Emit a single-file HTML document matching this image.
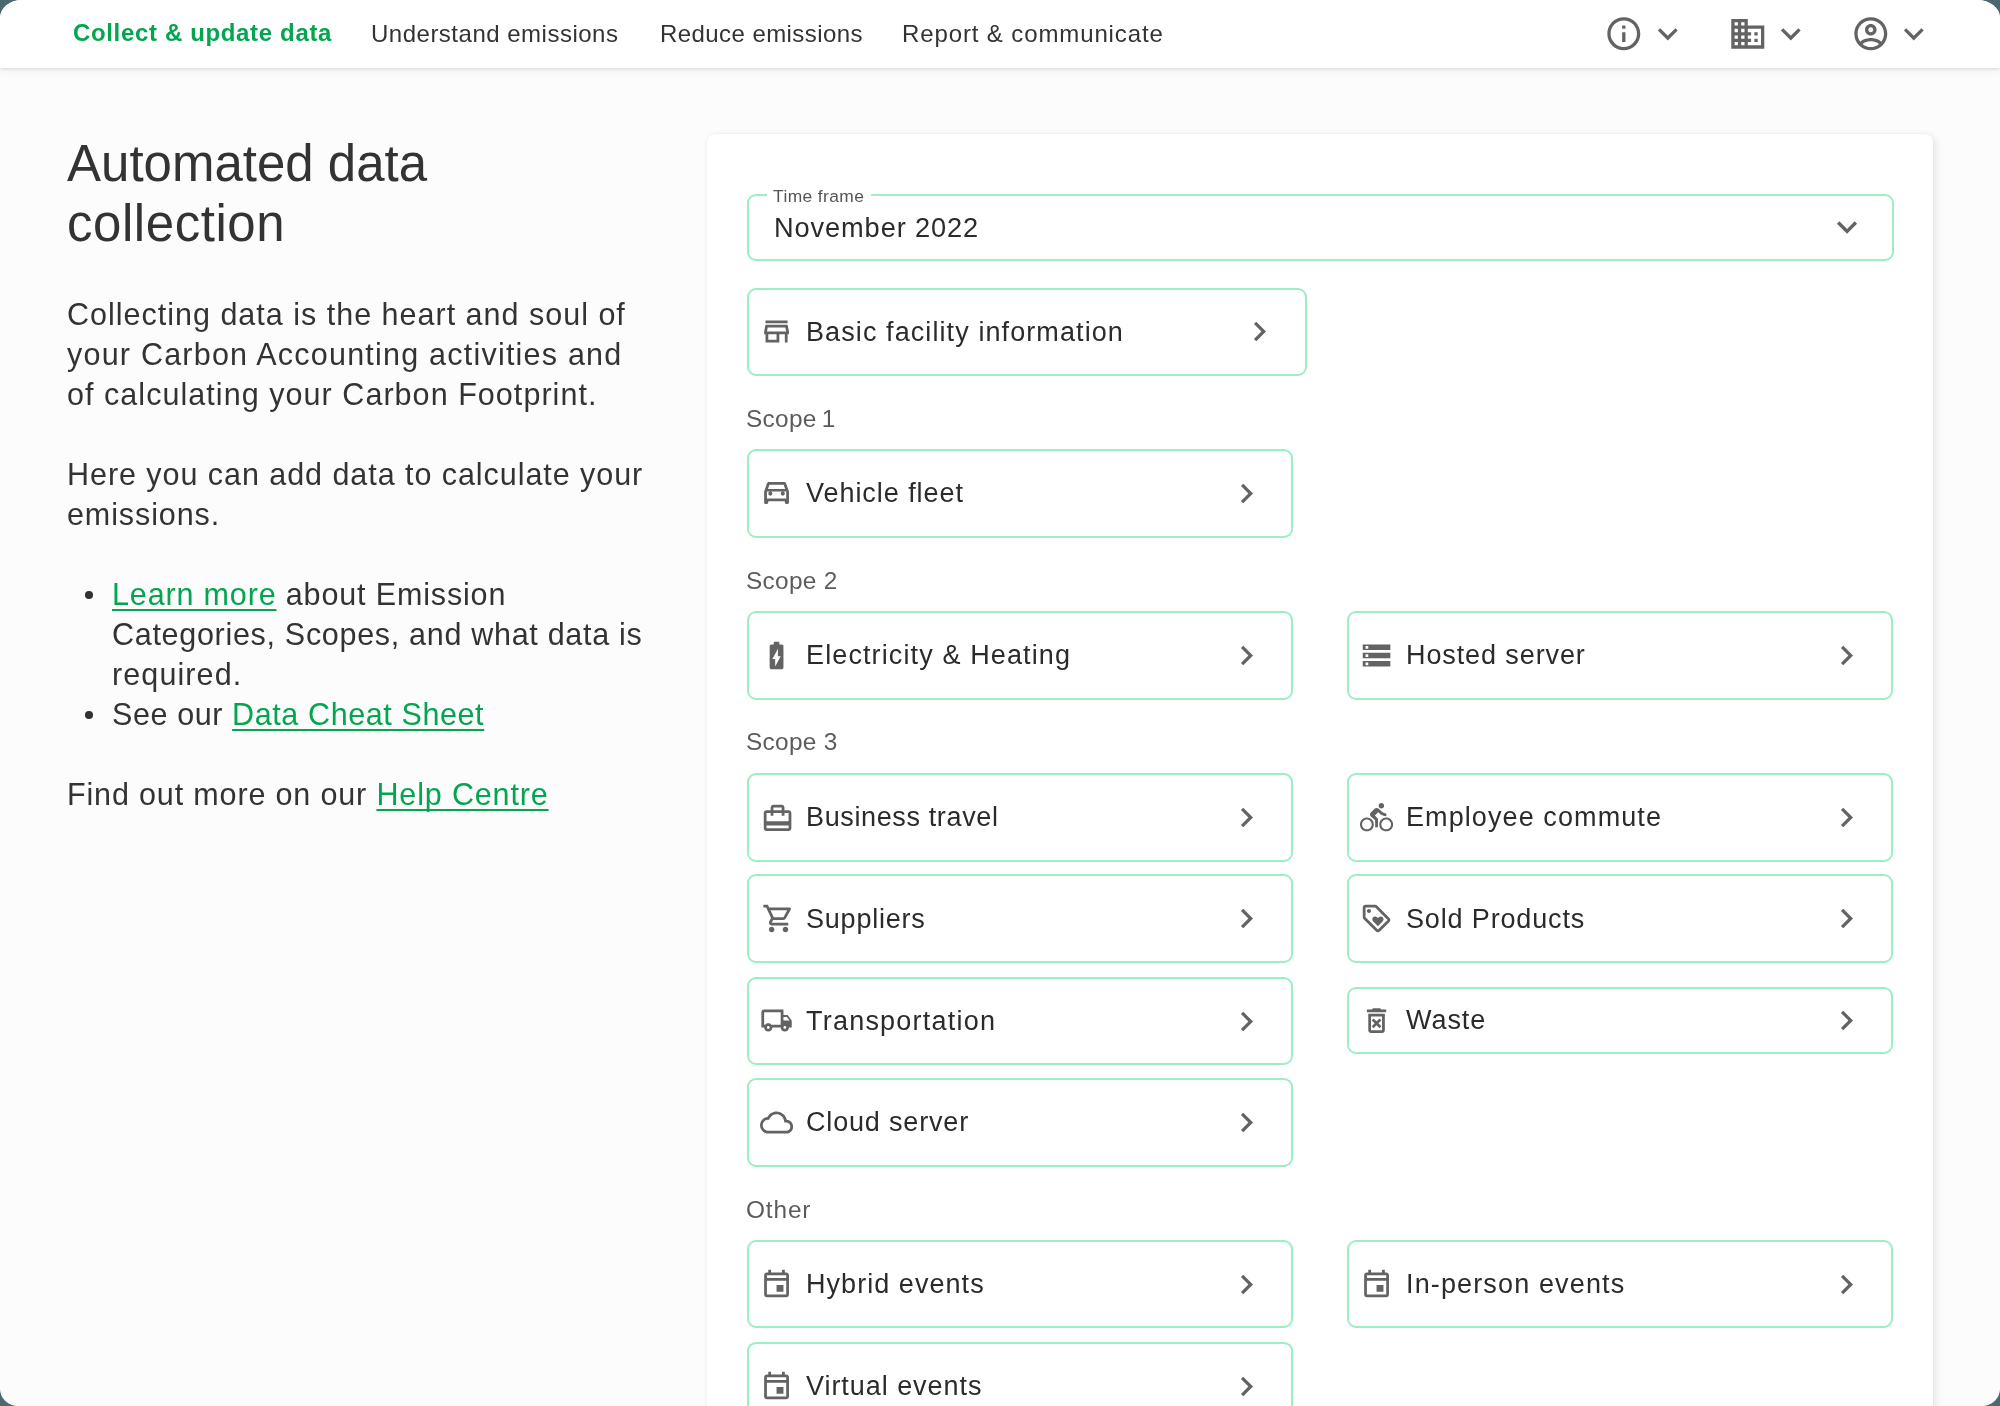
<!DOCTYPE html>
<html><head><meta charset="utf-8"><title>Automated data collection</title>
<style>
html,body{margin:0;padding:0;width:2000px;height:1406px;overflow:hidden;background:#4b6770;}
#page{position:relative;width:2000px;height:1406px;background:#fcfcfc;border-radius:22px 23px 18px 18px / 18px 18px 17px 17px;overflow:hidden;font-family:"Liberation Sans",sans-serif;}
.t{position:absolute;white-space:nowrap;will-change:transform;}
.t a{color:#04a550;text-decoration:underline;text-decoration-thickness:2px;text-underline-offset:3.5px;text-decoration-skip-ink:none;}
.ic{position:absolute;}
#nav{position:absolute;left:0;top:0;width:2000px;height:67.5px;background:#fff;box-shadow:0 1px 3px rgba(0,0,0,0.12),0 3px 10px rgba(0,0,0,0.05);}
#panel{position:absolute;left:707px;top:134px;width:1226px;height:1400px;background:#fff;border-radius:8px;box-shadow:3px 2px 9px rgba(0,0,0,0.09),0 0 3px rgba(0,0,0,0.05);}
.field,.card{position:absolute;box-sizing:border-box;border:2px solid #9befc2;border-radius:9px;background:#fff;}
.bul{position:absolute;width:7.6px;height:7.6px;border-radius:50%;background:#333;}
</style></head>
<body><div id="page">
<div id="nav"></div>
<div class="t" style="left:72.60px;top:21.48px;font-size:24px;line-height:24px;color:#04a550;font-weight:700;letter-spacing:0.65px;">Collect &amp; update data</div>
<div class="t" style="left:371.40px;top:21.68px;font-size:24px;line-height:24px;color:#333;font-weight:400;letter-spacing:0.5px;">Understand emissions</div>
<div class="t" style="left:659.80px;top:21.68px;font-size:24px;line-height:24px;color:#333;font-weight:400;letter-spacing:0.43px;">Reduce emissions</div>
<div class="t" style="left:901.80px;top:21.68px;font-size:24px;line-height:24px;color:#333;font-weight:400;letter-spacing:0.88px;">Report &amp; communicate</div>
<svg class="ic" style="left:1604.30px;top:14.20px;width:39.60px;height:39.60px" viewBox="0 0 24 24"><path fill="#636363" d="M11 7h2v2h-2zm0 4h2v6h-2zm1-9C6.48 2 2 6.48 2 12s4.48 10 10 10 10-4.48 10-10S17.52 2 12 2zm0 18c-4.41 0-8-3.59-8-8s3.59-8 8-8 8 3.59 8 8-3.59 8-8 8z"/></svg>
<svg class="ic" style="left:1647.60px;top:14.00px;width:39.60px;height:39.60px" viewBox="0 0 24 24"><path fill="#636363" d="M16.59 8.59L12 13.17 7.41 8.59 6 10l6 6 6-6z"/></svg>
<svg class="ic" style="left:1727.70px;top:14.30px;width:39.60px;height:39.60px" viewBox="0 0 24 24"><path fill="#636363" d="M12 7V3H2v18h20V7H12zM6 19H4v-2h2v2zm0-4H4v-2h2v2zm0-4H4V9h2v2zm0-4H4V5h2v2zm4 12H8v-2h2v2zm0-4H8v-2h2v2zm0-4H8V9h2v2zm0-4H8V5h2v2zm10 12h-8v-2h2v-2h-2v-2h2v-2h-2V9h8v10zm-2-8h-2v2h2v-2zm0 4h-2v2h2v-2z"/></svg>
<svg class="ic" style="left:1771.00px;top:14.00px;width:39.60px;height:39.60px" viewBox="0 0 24 24"><path fill="#636363" d="M16.59 8.59L12 13.17 7.41 8.59 6 10l6 6 6-6z"/></svg>
<svg class="ic" style="left:1851.00px;top:14.20px;width:39.60px;height:39.60px" viewBox="0 0 24 24"><path fill="#636363" d="M12 2C6.48 2 2 6.48 2 12s4.48 10 10 10 10-4.48 10-10S17.52 2 12 2zM7.07 18.28c.43-.9 3.05-1.78 4.93-1.78s4.51.88 4.93 1.78C15.57 19.36 13.86 20 12 20s-3.57-.64-4.93-1.72zm11.29-1.45c-1.43-1.74-4.9-2.33-6.36-2.33s-4.93.59-6.36 2.33C4.62 15.49 4 13.82 4 12c0-4.41 3.59-8 8-8s8 3.59 8 8c0 1.82-.62 3.49-1.64 4.83zM12 6c-1.94 0-3.5 1.56-3.5 3.5S10.06 13 12 13s3.5-1.56 3.5-3.5S13.94 6 12 6zm0 5c-.83 0-1.5-.67-1.5-1.5S11.17 8 12 8s1.5.67 1.5 1.5S12.83 11 12 11z"/></svg>
<svg class="ic" style="left:1894.30px;top:14.00px;width:39.60px;height:39.60px" viewBox="0 0 24 24"><path fill="#636363" d="M16.59 8.59L12 13.17 7.41 8.59 6 10l6 6 6-6z"/></svg>
<div class="t" style="left:67.00px;top:137.82px;font-size:51px;line-height:51px;color:#333;font-weight:400;letter-spacing:0.0px;">Automated data</div>
<div class="t" style="left:66.50px;top:198.02px;font-size:51px;line-height:51px;color:#333;font-weight:400;letter-spacing:0.56px;">collection</div>
<div class="t" style="left:66.50px;top:298.78px;font-size:30.5px;line-height:30.5px;color:#333;font-weight:400;letter-spacing:1.0px;">Collecting data is the heart and soul of</div>
<div class="t" style="left:66.50px;top:338.78px;font-size:30.5px;line-height:30.5px;color:#333;font-weight:400;letter-spacing:1.22px;">your Carbon Accounting activities and</div>
<div class="t" style="left:66.50px;top:378.78px;font-size:30.5px;line-height:30.5px;color:#333;font-weight:400;letter-spacing:1.05px;">of calculating your Carbon Footprint.</div>
<div class="t" style="left:66.50px;top:458.78px;font-size:30.5px;line-height:30.5px;color:#333;font-weight:400;letter-spacing:0.95px;">Here you can add data to calculate your</div>
<div class="t" style="left:66.50px;top:498.78px;font-size:30.5px;line-height:30.5px;color:#333;font-weight:400;letter-spacing:0.9px;">emissions.</div>
<div class="t" style="left:111.50px;top:578.78px;font-size:30.5px;line-height:30.5px;color:#333;font-weight:400;letter-spacing:0.85px;"><a>Learn more</a> about Emission</div>
<div class="t" style="left:111.50px;top:618.78px;font-size:30.5px;line-height:30.5px;color:#333;font-weight:400;letter-spacing:0.7px;">Categories, Scopes, and what data is</div>
<div class="t" style="left:111.50px;top:658.78px;font-size:30.5px;line-height:30.5px;color:#333;font-weight:400;letter-spacing:1.1px;">required.</div>
<div class="t" style="left:111.50px;top:698.78px;font-size:30.5px;line-height:30.5px;color:#333;font-weight:400;letter-spacing:0.6px;">See our <a>Data Cheat Sheet</a></div>
<div class="t" style="left:66.50px;top:778.78px;font-size:30.5px;line-height:30.5px;color:#333;font-weight:400;letter-spacing:0.85px;">Find out more on our <a>Help Centre</a></div>
<div class="bul" style="left:85.3px;top:591.1px"></div>
<div class="bul" style="left:85.3px;top:711.1px"></div>
<div id="panel"></div>
<div class="field" style="left:746.5px;top:194px;width:1147px;height:67px"></div>
<div style="position:absolute;left:766.5px;top:190px;width:104px;height:8px;background:#fff"></div>
<div class="t" style="left:772.50px;top:187.77px;font-size:17.4px;line-height:17.4px;color:#555;font-weight:400;letter-spacing:0.4px;">Time frame</div>
<div class="t" style="left:773.50px;top:213.57px;font-size:27.2px;line-height:27.2px;color:#2b2b2b;font-weight:400;letter-spacing:0.9px;">November 2022</div>
<svg class="ic" style="left:1826.60px;top:206.80px;width:40.08px;height:40.08px" viewBox="0 0 24 24"><path fill="#636363" d="M16.59 8.59L12 13.17 7.41 8.59 6 10l6 6 6-6z"/></svg>
<div class="card" style="left:746.5px;top:287.5px;width:560px;height:88.5px"></div>
<svg class="ic" style="left:760.00px;top:315.19px;width:33.12px;height:33.12px" viewBox="0 0 24 24"><path fill="#636363" d="M18.36 9l.6 3H5.04l.6-3h12.72M20 4H4v2h16V4zm0 3H4l-1 5v2h1v6h10v-6h4v6h2v-6h1v-2l-1-5zM6 18v-4h6v4H6z"/></svg>
<div class="t" style="left:806.00px;top:318.88px;font-size:27px;line-height:27px;color:#2b2b2b;font-weight:400;letter-spacing:1.09px;">Basic facility information</div>
<svg class="ic" style="left:1240.00px;top:312.25px;width:39.00px;height:39.00px" viewBox="0 0 24 24"><path fill="#636363" d="M10 6L8.59 7.41 13.17 12l-4.58 4.59L10 18l6-6z"/></svg>
<div class="t" style="left:746.00px;top:407.14px;font-size:24.4px;line-height:24.4px;color:#5c5c5c;font-weight:400;letter-spacing:0.3px;">Scope <span style="margin-left:-2px">1</span></div>
<div class="card" style="left:746.5px;top:449.0px;width:546.5px;height:88.5px"></div>
<svg class="ic" style="left:760.00px;top:475.19px;width:33.12px;height:33.12px" viewBox="0 0 24 24"><path fill="#636363" d="M18.92 6.01C18.72 5.42 18.16 5 17.5 5h-11c-.66 0-1.21.42-1.42 1.01L3 12v8c0 .55.45 1 1 1h1c.55 0 1-.45 1-1v-1h12v1c0 .55.45 1 1 1h1c.55 0 1-.45 1-1v-8l-2.08-5.99zM6.85 7h10.29l1.08 3.11H5.77L6.85 7zM19 17H5v-5h14v5zM7.5 13.5m-1.5 0a1.5 1.5 0 1 0 3 0a1.5 1.5 0 1 0 -3 0M16.5 13.5m-1.5 0a1.5 1.5 0 1 0 3 0a1.5 1.5 0 1 0 -3 0"/></svg>
<div class="t" style="left:806.00px;top:480.38px;font-size:27px;line-height:27px;color:#2b2b2b;font-weight:400;letter-spacing:0.95px;">Vehicle fleet</div>
<svg class="ic" style="left:1226.50px;top:473.75px;width:39.00px;height:39.00px" viewBox="0 0 24 24"><path fill="#636363" d="M10 6L8.59 7.41 13.17 12l-4.58 4.59L10 18l6-6z"/></svg>
<div class="t" style="left:746.00px;top:568.74px;font-size:24.4px;line-height:24.4px;color:#5c5c5c;font-weight:400;letter-spacing:0.3px;">Scope 2</div>
<div class="card" style="left:746.5px;top:611.0px;width:546.5px;height:88.5px"></div>
<svg class="ic" style="left:760.00px;top:638.69px;width:33.12px;height:33.12px" viewBox="0 0 24 24"><path fill="#636363" d="M15.67 4H14V2h-4v2H8.33C7.6 4 7 4.6 7 5.33v15.33C7 21.4 7.6 22 8.33 22h7.33c.74 0 1.34-.6 1.34-1.33V5.33C17 4.6 16.4 4 15.67 4zM11 20v-5.5H9L13 7v5.5h2L11 20z"/></svg>
<div class="t" style="left:806.00px;top:642.38px;font-size:27px;line-height:27px;color:#2b2b2b;font-weight:400;letter-spacing:1.12px;">Electricity &amp; Heating</div>
<svg class="ic" style="left:1226.50px;top:635.75px;width:39.00px;height:39.00px" viewBox="0 0 24 24"><path fill="#636363" d="M10 6L8.59 7.41 13.17 12l-4.58 4.59L10 18l6-6z"/></svg>
<div class="card" style="left:1346.5px;top:611.0px;width:546.5px;height:88.5px"></div>
<svg class="ic" style="left:1360.00px;top:638.69px;width:33.12px;height:33.12px" viewBox="0 0 24 24"><path fill="#636363" d="M2 20h20v-4H2v4zm2-3h2v2H4v-2zM2 4v4h20V4H2zm4 3H4V5h2v2zm-4 7h20v-4H2v4zm2-3h2v2H4v-2z"/></svg>
<div class="t" style="left:1406.00px;top:642.38px;font-size:27px;line-height:27px;color:#2b2b2b;font-weight:400;letter-spacing:0.9px;">Hosted server</div>
<svg class="ic" style="left:1826.50px;top:635.75px;width:39.00px;height:39.00px" viewBox="0 0 24 24"><path fill="#636363" d="M10 6L8.59 7.41 13.17 12l-4.58 4.59L10 18l6-6z"/></svg>
<div class="t" style="left:746.00px;top:730.44px;font-size:24.4px;line-height:24.4px;color:#5c5c5c;font-weight:400;letter-spacing:0.3px;">Scope 3</div>
<div class="card" style="left:746.5px;top:773.0px;width:546.5px;height:88.5px"></div>
<svg class="ic" style="left:760.50px;top:801.69px;width:33.12px;height:33.12px" viewBox="0 0 24 24"><path fill="#636363" d="M20 6h-3V4c0-1.11-.89-2-2-2H9c-1.11 0-2 .89-2 2v2H4c-1.11 0-2 .89-2 2v11c0 1.11.89 2 2 2h16c1.11 0 2-.89 2-2V8c0-1.11-.89-2-2-2zM9 4h6v2H9V4zm11 15H4v-2h16v2zm0-5H4V8h3v2h2V8h6v2h2V8h3v6z"/></svg>
<div class="t" style="left:806.00px;top:804.38px;font-size:27px;line-height:27px;color:#2b2b2b;font-weight:400;letter-spacing:0.63px;">Business travel</div>
<svg class="ic" style="left:1226.50px;top:797.75px;width:39.00px;height:39.00px" viewBox="0 0 24 24"><path fill="#636363" d="M10 6L8.59 7.41 13.17 12l-4.58 4.59L10 18l6-6z"/></svg>
<div class="card" style="left:1346.5px;top:773.0px;width:546.5px;height:88.5px"></div>
<svg class="ic" style="left:1360.00px;top:800.69px;width:33.12px;height:33.12px" viewBox="0 0 24 24"><path fill="#636363" d="M15.5 5.5c1.1 0 2-.9 2-2s-.9-2-2-2-2 .9-2 2 .9 2 2 2zM5 12c-2.8 0-5 2.2-5 5s2.2 5 5 5 5-2.2 5-5-2.2-5-5-5zm0 8.5c-1.9 0-3.5-1.6-3.5-3.5s1.6-3.5 3.5-3.5 3.5 1.6 3.5 3.5-1.6 3.5-3.5 3.5zm5.8-10l2.4-2.4.8.8c1.3 1.3 3 2.1 5.1 2.1V9c-1.5 0-2.7-.6-3.6-1.5l-1.9-1.9c-.5-.4-1-.6-1.6-.6s-1.1.2-1.4.6L7.8 8.4c-.4.4-.6.9-.6 1.4 0 .6.2 1.1.6 1.4L11 14v5h2v-6.2l-2.2-2.3zM19 12c-2.8 0-5 2.2-5 5s2.2 5 5 5 5-2.2 5-5-2.2-5-5-5zm0 8.5c-1.9 0-3.5-1.6-3.5-3.5s1.6-3.5 3.5-3.5 3.5 1.6 3.5 3.5-1.6 3.5-3.5 3.5z"/></svg>
<div class="t" style="left:1406.00px;top:804.38px;font-size:27px;line-height:27px;color:#2b2b2b;font-weight:400;letter-spacing:1.09px;">Employee commute</div>
<svg class="ic" style="left:1826.50px;top:797.75px;width:39.00px;height:39.00px" viewBox="0 0 24 24"><path fill="#636363" d="M10 6L8.59 7.41 13.17 12l-4.58 4.59L10 18l6-6z"/></svg>
<div class="card" style="left:746.5px;top:874.4px;width:546.5px;height:88.5px"></div>
<svg class="ic" style="left:761.50px;top:902.09px;width:33.12px;height:33.12px" viewBox="0 0 24 24"><path fill="#636363" d="M15.55 13c.75 0 1.41-.41 1.75-1.03l3.58-6.49c.37-.66-.11-1.48-.87-1.48H5.21l-.94-2H1v2h2l3.6 7.59-1.35 2.44C4.52 15.37 5.48 17 7 17h12v-2H7l1.1-2h7.45zM6.16 6h12.15l-2.76 5H8.53L6.16 6zM7 18c-1.1 0-1.99.9-1.99 2S5.9 22 7 22s2-.9 2-2-.9-2-2-2zm10 0c-1.1 0-1.99.9-1.99 2s.89 2 1.99 2 2-.9 2-2-.9-2-2-2z"/></svg>
<div class="t" style="left:806.00px;top:905.78px;font-size:27px;line-height:27px;color:#2b2b2b;font-weight:400;letter-spacing:0.78px;">Suppliers</div>
<svg class="ic" style="left:1226.50px;top:899.15px;width:39.00px;height:39.00px" viewBox="0 0 24 24"><path fill="#636363" d="M10 6L8.59 7.41 13.17 12l-4.58 4.59L10 18l6-6z"/></svg>
<div class="card" style="left:1346.5px;top:874.4px;width:546.5px;height:88.5px"></div>
<svg class="ic" style="left:1360.00px;top:902.09px;width:33.12px;height:33.12px" viewBox="0 0 24 24"><path fill="#636363" d="M21.41 11.58l-9-9C12.05 2.22 11.55 2 11 2H4c-1.1 0-2 .9-2 2v7c0 .55.22 1.05.59 1.42l9 9c.36.36.86.58 1.41.58s1.05-.22 1.41-.59l7-7c.37-.36.59-.86.59-1.41s-.23-1.06-.59-1.42zM13 20.01L4 11V4h7v-.01l9 9-7 7.02zM6.5 6.5m-1.5 0a1.5 1.5 0 1 0 3 0a1.5 1.5 0 1 0 -3 0M8.9 12.55c0 .57.23 1.07.6 1.45l3.5 3.5 3.5-3.5c.37-.37.6-.89.6-1.45 0-1.13-.92-2.05-2.05-2.05-.57 0-1.08.23-1.45.6l-.6.6-.6-.59c-.37-.38-.89-.61-1.45-.61-1.13 0-2.05.92-2.05 2.05z"/></svg>
<div class="t" style="left:1406.00px;top:905.78px;font-size:27px;line-height:27px;color:#2b2b2b;font-weight:400;letter-spacing:0.85px;">Sold Products</div>
<svg class="ic" style="left:1826.50px;top:899.15px;width:39.00px;height:39.00px" viewBox="0 0 24 24"><path fill="#636363" d="M10 6L8.59 7.41 13.17 12l-4.58 4.59L10 18l6-6z"/></svg>
<div class="card" style="left:746.5px;top:977.0px;width:546.5px;height:88.0px"></div>
<svg class="ic" style="left:760.00px;top:1004.44px;width:33.12px;height:33.12px" viewBox="0 0 24 24"><path fill="#636363" d="M20 8h-3V4H3c-1.1 0-2 .9-2 2v11h2c0 1.66 1.34 3 3 3s3-1.34 3-3h6c0 1.66 1.34 3 3 3s3-1.34 3-3h2v-5l-3-4zm-.5 1.5l1.96 2.5H17V9.5h2.5zM6 18c-.55 0-1-.45-1-1s.45-1 1-1 1 .45 1 1-.45 1-1 1zm2.22-3c-.55-.61-1.33-1-2.22-1s-1.67.39-2.22 1H3V6h12v9H8.22zM18 18c-.55 0-1-.45-1-1s.45-1 1-1 1 .45 1 1-.45 1-1 1z"/></svg>
<div class="t" style="left:806.00px;top:1008.13px;font-size:27px;line-height:27px;color:#2b2b2b;font-weight:400;letter-spacing:1.22px;">Transportation</div>
<svg class="ic" style="left:1226.50px;top:1001.50px;width:39.00px;height:39.00px" viewBox="0 0 24 24"><path fill="#636363" d="M10 6L8.59 7.41 13.17 12l-4.58 4.59L10 18l6-6z"/></svg>
<div class="card" style="left:1346.5px;top:987.0px;width:546.5px;height:66.5px"></div>
<svg class="ic" style="left:1360.00px;top:1003.69px;width:33.12px;height:33.12px" viewBox="0 0 24 24"><path fill="#636363" d="M14.12 10.47L12 12.59l-2.13-2.12-1.41 1.41L10.59 14l-2.12 2.12 1.41 1.41L12 15.41l2.12 2.12 1.41-1.41L13.41 14l2.12-2.12zM15.5 4l-1-1h-5l-1 1H5v2h14V4zM6 19c0 1.1.9 2 2 2h8c1.1 0 2-.9 2-2V7H6v12zM8 9h8v10H8V9z"/></svg>
<div class="t" style="left:1406.00px;top:1007.38px;font-size:27px;line-height:27px;color:#2b2b2b;font-weight:400;letter-spacing:0.95px;">Waste</div>
<svg class="ic" style="left:1826.50px;top:1000.75px;width:39.00px;height:39.00px" viewBox="0 0 24 24"><path fill="#636363" d="M10 6L8.59 7.41 13.17 12l-4.58 4.59L10 18l6-6z"/></svg>
<div class="card" style="left:746.5px;top:1078.0px;width:546.5px;height:88.5px"></div>
<svg class="ic" style="left:760.00px;top:1105.69px;width:33.12px;height:33.12px" viewBox="0 0 24 24"><path fill="#636363" d="M19.35 10.04C18.67 6.59 15.64 4 12 4 9.11 4 6.6 5.64 5.35 8.04 2.34 8.36 0 10.91 0 14c0 3.31 2.69 6 6 6h13c2.76 0 5-2.24 5-5 0-2.64-2.05-4.78-4.65-4.96zM19 18H6c-2.21 0-4-1.79-4-4 0-2.05 1.53-3.76 3.56-3.97l1.07-.11.5-.95C8.08 7.14 9.94 6 12 6c2.62 0 4.88 1.86 5.39 4.43l.3 1.5 1.53.11c1.56.1 2.78 1.41 2.78 2.96 0 1.65-1.35 3-3 3z"/></svg>
<div class="t" style="left:806.00px;top:1109.38px;font-size:27px;line-height:27px;color:#2b2b2b;font-weight:400;letter-spacing:0.83px;">Cloud server</div>
<svg class="ic" style="left:1226.50px;top:1102.75px;width:39.00px;height:39.00px" viewBox="0 0 24 24"><path fill="#636363" d="M10 6L8.59 7.41 13.17 12l-4.58 4.59L10 18l6-6z"/></svg>
<div class="t" style="left:746.00px;top:1197.64px;font-size:24.4px;line-height:24.4px;color:#5c5c5c;font-weight:400;letter-spacing:0.86px;">Other</div>
<div class="card" style="left:746.5px;top:1240.0px;width:546.5px;height:88.0px"></div>
<svg class="ic" style="left:760.00px;top:1267.44px;width:33.12px;height:33.12px" viewBox="0 0 24 24"><path fill="#636363" d="M19 4h-1V2h-2v2H8V2H6v2H5c-1.11 0-1.99.9-1.99 2L3 20c0 1.1.89 2 2 2h14c1.1 0 2-.89 2-2V6c0-1.1-.9-2-2-2zm0 16H5V10h14v10zm0-12H5V6h14v2zm-2 5h-5v5h5v-5z"/></svg>
<div class="t" style="left:806.00px;top:1271.13px;font-size:27px;line-height:27px;color:#2b2b2b;font-weight:400;letter-spacing:1.05px;">Hybrid events</div>
<svg class="ic" style="left:1226.50px;top:1264.50px;width:39.00px;height:39.00px" viewBox="0 0 24 24"><path fill="#636363" d="M10 6L8.59 7.41 13.17 12l-4.58 4.59L10 18l6-6z"/></svg>
<div class="card" style="left:1346.5px;top:1240.0px;width:546.5px;height:88.0px"></div>
<svg class="ic" style="left:1360.00px;top:1267.44px;width:33.12px;height:33.12px" viewBox="0 0 24 24"><path fill="#636363" d="M19 4h-1V2h-2v2H8V2H6v2H5c-1.11 0-1.99.9-1.99 2L3 20c0 1.1.89 2 2 2h14c1.1 0 2-.89 2-2V6c0-1.1-.9-2-2-2zm0 16H5V10h14v10zm0-12H5V6h14v2zm-2 5h-5v5h5v-5z"/></svg>
<div class="t" style="left:1406.00px;top:1271.13px;font-size:27px;line-height:27px;color:#2b2b2b;font-weight:400;letter-spacing:1.14px;">In-person events</div>
<svg class="ic" style="left:1826.50px;top:1264.50px;width:39.00px;height:39.00px" viewBox="0 0 24 24"><path fill="#636363" d="M10 6L8.59 7.41 13.17 12l-4.58 4.59L10 18l6-6z"/></svg>
<div class="card" style="left:746.5px;top:1342.0px;width:546.5px;height:88.0px"></div>
<svg class="ic" style="left:760.00px;top:1369.44px;width:33.12px;height:33.12px" viewBox="0 0 24 24"><path fill="#636363" d="M19 4h-1V2h-2v2H8V2H6v2H5c-1.11 0-1.99.9-1.99 2L3 20c0 1.1.89 2 2 2h14c1.1 0 2-.89 2-2V6c0-1.1-.9-2-2-2zm0 16H5V10h14v10zm0-12H5V6h14v2zm-2 5h-5v5h5v-5z"/></svg>
<div class="t" style="left:806.00px;top:1373.13px;font-size:27px;line-height:27px;color:#2b2b2b;font-weight:400;letter-spacing:0.95px;">Virtual events</div>
<svg class="ic" style="left:1226.50px;top:1366.50px;width:39.00px;height:39.00px" viewBox="0 0 24 24"><path fill="#636363" d="M10 6L8.59 7.41 13.17 12l-4.58 4.59L10 18l6-6z"/></svg>
</div></body></html>
